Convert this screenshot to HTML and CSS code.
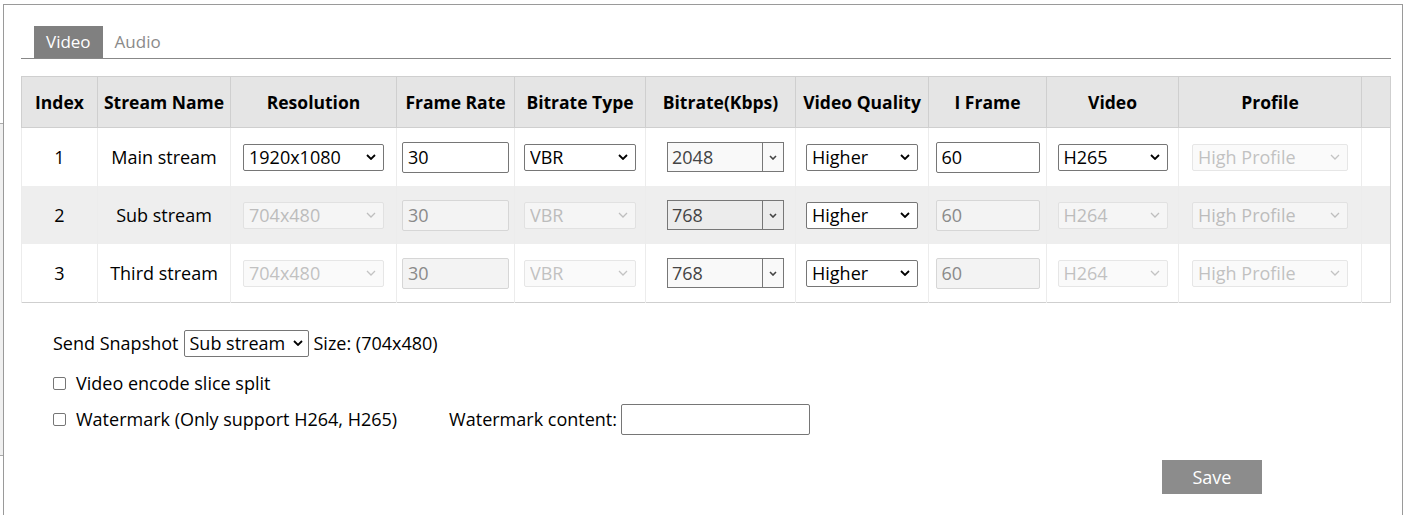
FILE: index.html
```html
<!DOCTYPE html>
<html lang="en">
<head>
    <meta charset="UTF-8">
    <title>Video Settings</title>
    <link rel="stylesheet" href="styles.css">
</head>
<body>
    <div class="frame">
        <!-- Tabs -->
        <div class="tabs">
            <span class="tab active">Video</span>
            <span class="tab">Audio</span>
        </div>

        <!-- Stream table -->
        <table class="streams">
            <colgroup>
                <col style="width: 76px">
                <col style="width: 133px">
                <col style="width: 166px">
                <col style="width: 118px">
                <col style="width: 131px">
                <col style="width: 150px">
                <col style="width: 133px">
                <col style="width: 118px">
                <col style="width: 132px">
                <col style="width: 183px">
                <col style="width: 29px">
            </colgroup>
            <thead>
                <tr>
                    <th>Index</th>
                    <th>Stream Name</th>
                    <th>Resolution</th>
                    <th>Frame Rate</th>
                    <th>Bitrate Type</th>
                    <th>Bitrate(Kbps)</th>
                    <th>Video Quality</th>
                    <th>I Frame</th>
                    <th>Video</th>
                    <th>Profile</th>
                    <th></th>
                </tr>
            </thead>
            <tbody>
                <tr>
                    <td>1</td>
                    <td>Main stream</td>
                    <td><select class="sel w-res"><option>1920x1080</option></select></td>
                    <td><input class="txt w-fr" type="text" value="30"></td>
                    <td><select class="sel w-type"><option>VBR</option></select></td>
                    <td><span class="combo"><span class="combo-val">2048</span><span class="combo-btn"><svg width="8" height="5" viewBox="0 0 8 5"><path d="M1 1l3 3 3-3" fill="none" stroke="#444" stroke-width="1.6"/></svg></span></span></td>
                    <td><select class="sel w-qual"><option>Higher</option></select></td>
                    <td><input class="txt w-if" type="text" value="60"></td>
                    <td><select class="sel w-codec"><option>H265</option></select></td>
                    <td><select class="sel w-prof" disabled><option>High Profile</option></select></td>
                    <td></td>
                </tr>
                <tr class="alt">
                    <td>2</td>
                    <td>Sub stream</td>
                    <td><select class="sel w-res" disabled><option>704x480</option></select></td>
                    <td><input class="txt w-fr" type="text" value="30" disabled></td>
                    <td><select class="sel w-type" disabled><option>VBR</option></select></td>
                    <td><span class="combo"><span class="combo-val">768</span><span class="combo-btn"><svg width="8" height="5" viewBox="0 0 8 5"><path d="M1 1l3 3 3-3" fill="none" stroke="#444" stroke-width="1.6"/></svg></span></span></td>
                    <td><select class="sel w-qual"><option>Higher</option></select></td>
                    <td><input class="txt w-if" type="text" value="60" disabled></td>
                    <td><select class="sel w-codec" disabled><option>H264</option></select></td>
                    <td><select class="sel w-prof" disabled><option>High Profile</option></select></td>
                    <td></td>
                </tr>
                <tr>
                    <td>3</td>
                    <td>Third stream</td>
                    <td><select class="sel w-res" disabled><option>704x480</option></select></td>
                    <td><input class="txt w-fr" type="text" value="30" disabled></td>
                    <td><select class="sel w-type" disabled><option>VBR</option></select></td>
                    <td><span class="combo"><span class="combo-val">768</span><span class="combo-btn"><svg width="8" height="5" viewBox="0 0 8 5"><path d="M1 1l3 3 3-3" fill="none" stroke="#444" stroke-width="1.6"/></svg></span></span></td>
                    <td><select class="sel w-qual"><option>Higher</option></select></td>
                    <td><input class="txt w-if" type="text" value="60" disabled></td>
                    <td><select class="sel w-codec" disabled><option>H264</option></select></td>
                    <td><select class="sel w-prof" disabled><option>High Profile</option></select></td>
                    <td></td>
                </tr>
            </tbody>
        </table>

        <!-- Extra options -->
        <div class="options">
            <div class="opt-row snap-row">
                <span>Send Snapshot</span>
                <select class="sel sel-small"><option>Sub stream</option></select>
                <span>Size: (704x480)</span>
            </div>
            <label class="opt-row check-row slice-row">
                <input type="checkbox" class="chk">
                <span>Video encode slice split</span>
            </label>
            <div class="opt-row check-row mark-row">
                <label class="mark-check">
                    <input type="checkbox" class="chk">
                    <span>Watermark (Only support H264, H265)</span>
                </label>
                <span class="mark-label">Watermark content:</span>
                <input type="text" class="txt w-mark">
            </div>
        </div>

        <div class="actions">
            <button class="btn-save">Save</button>
        </div>
    </div>
</body>
</html>
```

FILE: styles.css
```css
body {
    margin: 0;
    font-family: 'Segoe UI', 'Open Sans', 'Noto Sans', sans-serif;
    color: #000;
    background: #fff linear-gradient(to bottom, #fff 123px, #aaa 123px, #aaa 124px, #f0f0f0 124px, #f0f0f0 455px, #aaa 455px, #aaa 456px, #fff 456px) no-repeat;
    background-size: 3px 100%;
}
.frame {
    box-sizing: border-box;
    width: 1400px;
    height: 511px;
    margin: 4px 0 0 3px;
    padding: 21px 11px 0 17px;
    border: 1px solid #9a9a9a;
    border-bottom: none;
    background: #fff;
}

/* tabs */
.tabs {
    display: flex;
    padding-left: 13px;
    border-bottom: 1px solid #888;
    height: 32px;
}
.tab {
    padding: 0 12px;
    font-size: 17px;
    line-height: 32px;
    color: #8a8a8a;
}
.tab.active {
    background: #808080;
    color: #fff;
}

/* table */
.streams {
    margin-top: 17px;
    width: 1370px;
    table-layout: fixed;
    border-collapse: collapse;
    border: 1px solid #cfcfcf;
}
.streams th {
    height: 50px;
    padding: 0;
    background: #e5e5e5;
    border: 1px solid #cfcfcf;
    font-size: 17.5px;
    font-weight: 700;
    text-align: center;
}
.streams td {
    height: 58px;
    padding: 0;
    border-left: 1px solid #ececec;
    font-size: 18px;
    text-align: center;
}
.streams tr.alt td { background: #eeeeee; }

/* controls */
.sel, .txt {
    box-sizing: border-box;
    font-family: inherit;
    font-size: 18px;
    color: #000;
    vertical-align: middle;
}
.sel {
    -webkit-appearance: none;
    appearance: none;
    height: 27px;
    padding: 0 0 0 5px;
    border: 1px solid #767676;
    border-radius: 2px;
    background: #fff url("data:image/svg+xml,%3Csvg xmlns='http://www.w3.org/2000/svg' width='10' height='6' viewBox='0 0 10 6'%3E%3Cpath d='M1 1l4 4 4-4' fill='none' stroke='%23000' stroke-width='1.8'/%3E%3C/svg%3E") no-repeat right 7px center;
    text-align: left;
}
.sel:disabled {
    color: #a8a8a8;
    border-color: #dcdcdc;
    background-color: #f9f9f9;
    background-image: url("data:image/svg+xml,%3Csvg xmlns='http://www.w3.org/2000/svg' width='10' height='6' viewBox='0 0 10 6'%3E%3Cpath d='M1 1l4 4 4-4' fill='none' stroke='%23aaa' stroke-width='1.3'/%3E%3C/svg%3E");
}
.txt {
    height: 31px;
    padding: 0 5px;
    border: 1px solid #767676;
    border-radius: 2px;
    background: #fff;
}
.txt:disabled {
    color: #8a8a8a;
    border-color: #d6d6d6;
    background: #f3f3f3;
}
.w-res { width: 141px; }
.w-fr { width: 107px; }
.w-type { width: 112px; }
.w-qual { width: 112px; }
.w-if { width: 104px; }
.w-codec { width: 110px; }
.w-prof { width: 156px; }

.combo {
    display: inline-flex;
    box-sizing: border-box;
    width: 117px;
    height: 30px;
    margin-left: 10px;
    border: 1px solid #777;
    background: #f9f9f9;
    vertical-align: middle;
    text-align: left;
}
.alt .combo { background: #ececec; }
.combo-val {
    flex: 1;
    padding-left: 4px;
    font-size: 18px;
    line-height: 28px;
    color: #444;
}
.combo-btn {
    width: 20px;
    display: flex;
    align-items: center;
    justify-content: center;
    border-left: 1px solid #777;
}

/* options below table */
.options {
    padding: 26px 0 0 32px;
    font-size: 18px;
}
.opt-row {
    display: flex;
    align-items: center;
    gap: 5px;
}
.snap-row { height: 28px; }
.sel-small {
    width: 125px;
    height: 27px;
    padding-left: 5px;
    background-position: right 5px center;
}
.check-row {
    margin-top: 12px;
    height: 24px;
    gap: 10px;
}
.slice-row { margin-top: 14px; }
.mark-row { gap: 0; }
.mark-check {
    display: flex;
    align-items: center;
    gap: 10px;
}
.mark-label { margin: 0 4px 0 52px; }
.chk {
    -webkit-appearance: none;
    appearance: none;
    width: 13px;
    height: 13px;
    margin: 0;
    border: 1px solid #767676;
    border-radius: 2px;
    background: #fff;
}
.w-mark {
    width: 189px;
    height: 31px;
}

.actions {
    display: flex;
    justify-content: flex-end;
    padding-right: 129px;
    margin-top: 29px;
}
.btn-save {
    width: 100px;
    height: 34px;
    border: none;
    background: #8c8c8c;
    color: #fff;
    font-family: inherit;
    font-size: 18px;
}
```
